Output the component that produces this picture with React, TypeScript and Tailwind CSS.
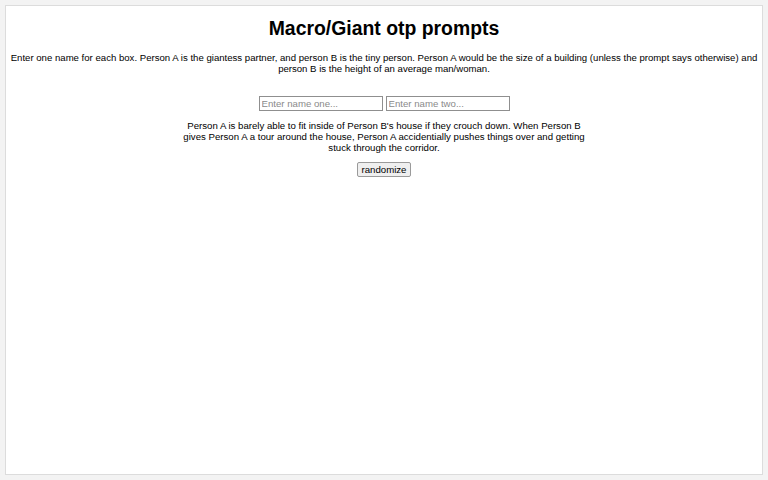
import { useState } from "react";

const prompts = [
  "Person A is barely able to fit inside of Person B's house if they crouch down. When Person B gives Person A a tour around the house, Person A accidentially pushes things over and getting stuck through the corridor.",
];

export default function App() {
  const [one, setOne] = useState("");
  const [two, setTwo] = useState("");
  const [idx, setIdx] = useState(0);

  const text = prompts[idx]
    .replaceAll("Person A", one || "Person A")
    .replaceAll("Person B", two || "Person B");

  return (
    <div className="min-h-screen bg-[#f3f3f3] p-[5px] font-['Liberation_Sans',Arial,sans-serif] text-black">
      <div className="h-[470px] border border-[#dcdcdc] bg-white px-[2px] pt-[10px] text-center">
        <h1 className="text-[19.4px] font-bold leading-[24px]">Macro/Giant otp prompts</h1>
        <p className="mt-[12px] text-[9.6px] leading-[11px]">
          Enter one name for each box. Person A is the giantess partner, and person B is the tiny person. Person A would be the size of a building (unless the prompt says otherwise) and person B is the height of an average man/woman.
        </p>
        <div className="mt-[22px] flex justify-center gap-[3px]">
          <input
            value={one}
            onChange={(e) => setOne(e.target.value)}
            placeholder="Enter name one..."
            className="h-[15px] w-[124px] border border-[#8f8f8f] px-[2px] text-[9.65px] leading-[13px] placeholder:text-[#8a8a8a]"
          />
          <input
            value={two}
            onChange={(e) => setTwo(e.target.value)}
            placeholder="Enter name two..."
            className="h-[15px] w-[124px] border border-[#8f8f8f] px-[2px] text-[9.65px] leading-[13px] placeholder:text-[#8a8a8a]"
          />
        </div>
        <p className="mx-auto mt-[9px] w-[404px] text-[9.65px] leading-[11px]">{text}</p>
        <button
          onClick={() => setIdx((idx + 1) % prompts.length)}
          className="mt-[9px] h-[15px] rounded-[2px] border border-[#9a9a9a] bg-[#efefef] px-[4px] text-[9.65px] leading-[13px]"
        >
          randomize
        </button>
      </div>
    </div>
  );
}
